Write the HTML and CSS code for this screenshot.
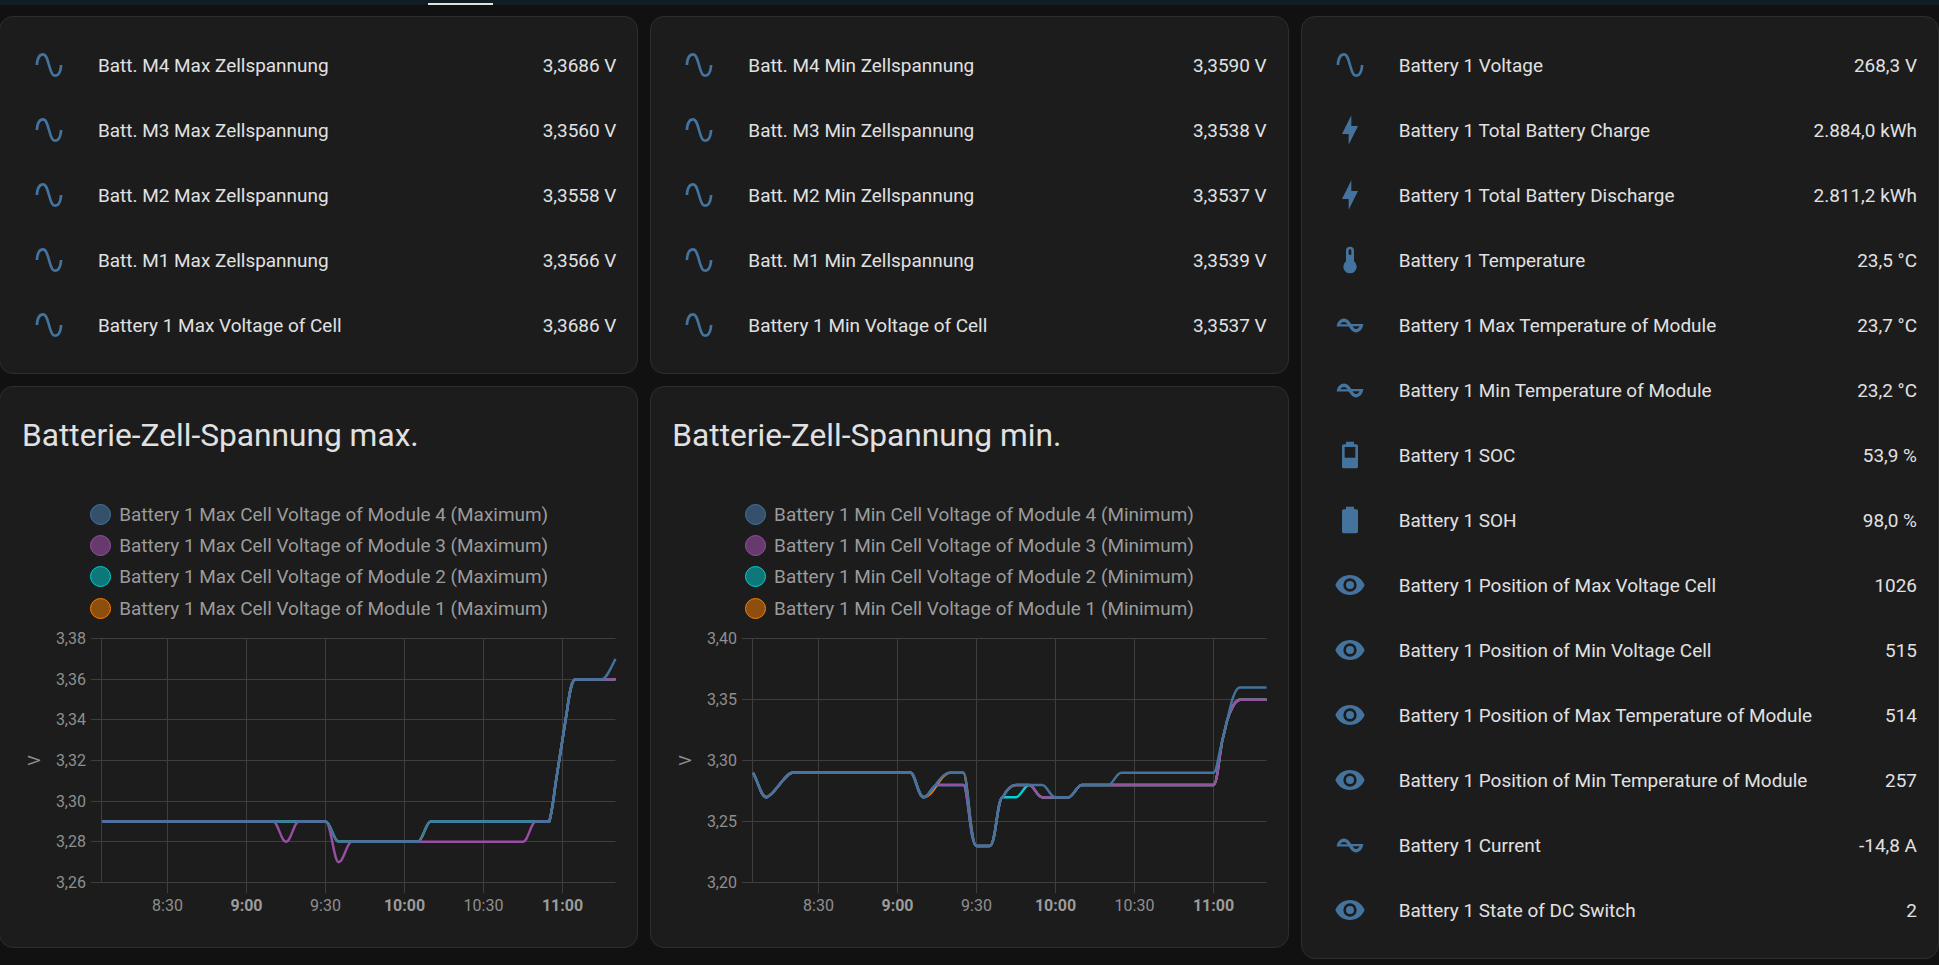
FILE: index.html
```html
<!DOCTYPE html>
<html lang="de">
<head>
<meta charset="utf-8">
<title>Battery</title>
<link rel="stylesheet" href="styles.css">
</head>
<body>
<svg class="defs" width="0" height="0" aria-hidden="true">
  <symbol id="i-sine" viewBox="0 0 24 24"><path d="M16.5,21C13.5,21 12.31,16.76 11.05,12.28C10.14,9.04 9,5 7.5,5C4.11,5 4,11.93 4,12H2C2,11.63 2.06,3 7.5,3C10.5,3 11.71,7.25 12.97,11.74C13.83,14.8 15,19 16.5,19C19.94,19 20.03,12.07 20.03,12H22.03C22.03,12.37 21.97,21 16.5,21Z"/></symbol>
  <symbol id="i-bolt" viewBox="0 0 24 24"><path d="M11 15H6L13 1V9H18L11 23V15Z"/></symbol>
  <symbol id="i-temp" viewBox="0 0 24 24"><path d="M15 13V5A3 3 0 0 0 9 5V13A5 5 0 1 0 15 13M12 4A1 1 0 0 1 13 5V8H11V5A1 1 0 0 1 12 4Z"/></symbol>
  <symbol id="i-ac" viewBox="0 0 24 24"><path fill-rule="evenodd" d="M2 13.2C2.4 9.6 5 7.2 7.5 7.2C10 7.2 11.6 9.4 13 11.3H22C21.6 15.2 19 17.6 16.5 17.6C14 17.6 12.4 15.2 11 13.2ZM4.8 11.5H10C9.5 10.5 8.6 9.8 7.5 9.8C6.3 9.8 5.3 10.5 4.8 11.5ZM14 13C14.5 14.1 15.4 15 16.5 15C17.7 15 18.7 14.1 19.2 13Z"/></symbol>
  <symbol id="i-b50" viewBox="0 0 24 24"><path d="M16,14H8V6H16M16.67,4H15V2H9V4H7.33A1.33,1.33 0 0,0 6,5.33V20.66C6,21.4 6.6,22 7.33,22H16.67C17.41,22 18,21.41 18,20.67V5.33C18,4.6 17.4,4 16.67,4Z"/></symbol>
  <symbol id="i-bat" viewBox="0 0 24 24"><path d="M16.67,4H15V2H9V4H7.33A1.33,1.33 0 0,0 6,5.33V20.67C6,21.4 6.6,22 7.33,22H16.67A1.33,1.33 0 0,0 18,20.67V5.33C18,4.6 17.4,4 16.67,4Z"/></symbol>
  <symbol id="i-eye" viewBox="0 0 24 24"><path d="M12,9A3,3 0 0,0 9,12A3,3 0 0,0 12,15A3,3 0 0,0 15,12A3,3 0 0,0 12,9M12,17A5,5 0 0,1 7,12A5,5 0 0,1 12,7A5,5 0 0,1 17,12A5,5 0 0,1 12,17M12,4.5C7,4.5 2.73,7.61 1,12C2.73,16.39 7,19.5 12,19.5C17,19.5 21.27,16.39 23,12C21.27,7.61 17,4.5 12,4.5Z"/></symbol>
</svg>

<header class="topbar"><span class="tab-indicator"></span></header>

<main class="columns">
  <div class="column">
    <section class="card entities">
      <div class="row"><svg class="icon"><use href="#i-sine"/></svg><span class="name">Batt. M4 Max Zellspannung</span><span class="value">3,3686 V</span></div>
      <div class="row"><svg class="icon"><use href="#i-sine"/></svg><span class="name">Batt. M3 Max Zellspannung</span><span class="value">3,3560 V</span></div>
      <div class="row"><svg class="icon"><use href="#i-sine"/></svg><span class="name">Batt. M2 Max Zellspannung</span><span class="value">3,3558 V</span></div>
      <div class="row"><svg class="icon"><use href="#i-sine"/></svg><span class="name">Batt. M1 Max Zellspannung</span><span class="value">3,3566 V</span></div>
      <div class="row"><svg class="icon"><use href="#i-sine"/></svg><span class="name">Battery 1 Max Voltage of Cell</span><span class="value">3,3686 V</span></div>
    </section>
    <section class="card chart-card">
      <h2 class="card-title">Batterie-Zell-Spannung max.</h2>
      <ul class="legend">
        <li class="legend-item"><span class="dot dot-blue"></span>Battery 1 Max Cell Voltage of Module 4 (Maximum)</li>
        <li class="legend-item"><span class="dot dot-purple"></span>Battery 1 Max Cell Voltage of Module 3 (Maximum)</li>
        <li class="legend-item"><span class="dot dot-teal"></span>Battery 1 Max Cell Voltage of Module 2 (Maximum)</li>
        <li class="legend-item"><span class="dot dot-orange"></span>Battery 1 Max Cell Voltage of Module 1 (Maximum)</li>
      </ul>
      <svg class="chart" viewBox="0 630 636 300" width="636" height="300">
        <g class="grid">
          <path d="M91 639.5H615.5M91 680.5H615.5M91 720.5H615.5M91 761.5H615.5M91 802.5H615.5M91 842.5H615.5M91 883.5H615.5"/>
          <path d="M101.5 639V884M167.5 639V894M246.5 639V894M325.5 639V894M404.5 639V894M483.5 639V894M562.5 639V894"/>
        </g>
        <g class="ylabels">
          <text x="86" y="645">3,38</text><text x="86" y="686">3,36</text><text x="86" y="726">3,34</text><text x="86" y="767">3,32</text><text x="86" y="808">3,30</text><text x="86" y="848">3,28</text><text x="86" y="889">3,26</text>
        </g>
        <text class="yunit" transform="translate(40 761.5) rotate(-90)">V</text>
        <g class="xlabels">
          <text x="167.5" y="912">8:30</text><text class="major" x="246.5" y="912">9:00</text><text x="325.5" y="912">9:30</text><text class="major" x="404.5" y="912">10:00</text><text x="483.5" y="912">10:30</text><text class="major" x="562.5" y="912">11:00</text>
        </g>
        <path class="line line-orange" d="M102 822.5H325.5C330.5 822.5 333.7 842.8 338.7 842.8H417.7C422.7 842.8 425.8 822.5 430.8 822.5H549.3C551.5 815 553 805 555.5 785L567 712C570 690 572 680.2 575.7 680.2H615.5"/>
        <path class="line line-teal" d="M102 822.5H325.5C330.5 822.5 333.7 842.8 338.7 842.8H417.7C422.7 842.8 425.8 822.5 430.8 822.5H549.3C551.5 815 553 805 555.5 785L567 712C570 690 572 680.2 575.7 680.2H615.5"/>
        <path class="line line-purple" d="M102 822.5H273C278 822.5 281 842.8 286 842.8C291 842.8 294 822.5 299 822.5H325.5C331 822.5 333.7 863.2 338.7 863.2C343.7 863.2 346.8 842.8 351.8 842.8H523C528 842.8 531 822.5 536 822.5H549.3C551.5 815 553 805 555.5 785L567 712C570 690 572 680.2 575.7 680.2H615.5"/>
        <path class="line line-blue" d="M102 822.5H325.5C330.5 822.5 333.7 842.8 338.7 842.8H417.7C422.7 842.8 425.8 822.5 430.8 822.5H549.3C551.5 815 553 805 555.5 785L567 712C570 690 572 680.2 575.7 680.2H602C606 680.2 610 671 615.5 659.9"/>
      </svg>
    </section>
  </div>

  <div class="column">
    <section class="card entities">
      <div class="row"><svg class="icon"><use href="#i-sine"/></svg><span class="name">Batt. M4 Min Zellspannung</span><span class="value">3,3590 V</span></div>
      <div class="row"><svg class="icon"><use href="#i-sine"/></svg><span class="name">Batt. M3 Min Zellspannung</span><span class="value">3,3538 V</span></div>
      <div class="row"><svg class="icon"><use href="#i-sine"/></svg><span class="name">Batt. M2 Min Zellspannung</span><span class="value">3,3537 V</span></div>
      <div class="row"><svg class="icon"><use href="#i-sine"/></svg><span class="name">Batt. M1 Min Zellspannung</span><span class="value">3,3539 V</span></div>
      <div class="row"><svg class="icon"><use href="#i-sine"/></svg><span class="name">Battery 1 Min Voltage of Cell</span><span class="value">3,3537 V</span></div>
    </section>
    <section class="card chart-card">
      <h2 class="card-title">Batterie-Zell-Spannung min.</h2>
      <ul class="legend">
        <li class="legend-item"><span class="dot dot-blue"></span>Battery 1 Min Cell Voltage of Module 4 (Minimum)</li>
        <li class="legend-item"><span class="dot dot-purple"></span>Battery 1 Min Cell Voltage of Module 3 (Minimum)</li>
        <li class="legend-item"><span class="dot dot-teal"></span>Battery 1 Min Cell Voltage of Module 2 (Minimum)</li>
        <li class="legend-item"><span class="dot dot-orange"></span>Battery 1 Min Cell Voltage of Module 1 (Minimum)</li>
      </ul>
      <svg class="chart" viewBox="0 630 636 300" width="636" height="300">
        <g class="grid">
          <path d="M91 639.5H615.5M91 700.5H615.5M91 761.5H615.5M91 822.5H615.5M91 883.5H615.5"/>
          <path d="M101.5 639V884M167.5 639V894M246.5 639V894M325.5 639V894M404.5 639V894M483.5 639V894M562.5 639V894"/>
        </g>
        <g class="ylabels">
          <text x="86" y="645">3,40</text><text x="86" y="706">3,35</text><text x="86" y="767">3,30</text><text x="86" y="828">3,25</text><text x="86" y="889">3,20</text>
        </g>
        <text class="yunit" transform="translate(40 761.5) rotate(-90)">V</text>
        <g class="xlabels">
          <text x="167.5" y="912">8:30</text><text class="major" x="246.5" y="912">9:00</text><text x="325.5" y="912">9:30</text><text class="major" x="404.5" y="912">10:00</text><text x="483.5" y="912">10:30</text><text class="major" x="562.5" y="912">11:00</text>
        </g>
        <path class="line line-orange" d="M102 773.8C107 782 110 798.2 115.2 798.2C122 798.2 134 773.8 141.5 773.8H259.7C264 773.8 267 798.2 272.8 798.2C280 798.2 285 786 291 779C294 775.5 296 773.8 299.2 773.8H312.3C317 773.8 319 847 325.5 847H338.7C345 847 346 798.2 351.8 798.2C355 792 360 786 365 786H378.2C383 786 386 798.2 391.3 798.2H417.7C422 798.2 426 786 430.8 786H562.5C566 786 568 760 571 743L576 722C579 712 584 700.7 589 700.7H615.5"/>
        <path class="line line-teal" d="M102 773.8C107 782 110 798.2 115.2 798.2C122 798.2 134 773.8 141.5 773.8H259.7C264 773.8 267 798.2 272.8 798.2C278 798.2 281 786 286 786H312.3C317 786 319 847 325.5 847H338.7C345 847 346 798.2 351.8 798.2H365C370 798.2 373 786 378.2 786C383 786 386 798.2 391.3 798.2H417.7C422 798.2 426 786 430.8 786H562.5C566 786 568 760 571 743L576 722C579 712 584 700.7 589 700.7H615.5"/>
        <path class="line line-purple" d="M102 773.8C107 782 110 798.2 115.2 798.2C122 798.2 134 773.8 141.5 773.8H259.7C264 773.8 267 798.2 272.8 798.2C278 798.2 281 786 286 786H312.3C317 786 319 847 325.5 847H338.7C345 847 346 798.2 351.8 798.2C355 792 360 786 365 786H378.2C383 786 386 798.2 391.3 798.2H417.7C422 798.2 426 786 430.8 786H562.5C566 786 568 760 571 743L576 722C579 712 584 700.7 589 700.7H615.5"/>
        <path class="line line-blue" d="M102 773.8C107 782 110 798.2 115.2 798.2C122 798.2 134 773.8 141.5 773.8H259.7C264 773.8 267 798.2 272.8 798.2C280 798.2 288 773.8 299.2 773.8H312.3C317 773.8 319 847 325.5 847H338.7C345 847 346 798.2 351.8 798.2C355 792 360 786 365 786H391.3C396 786 399 798.2 404.5 798.2H417.7C422 798.2 426 786 430.8 786H457.2C462 786 465 773.8 470.3 773.8H562.5C565 773.8 567 760 569.3 750L579.3 708C582 697 585 688.5 589 688.5H615.5"/>
      </svg>
    </section>
  </div>

  <div class="column">
    <section class="card entities">
      <div class="row"><svg class="icon"><use href="#i-sine"/></svg><span class="name">Battery 1 Voltage</span><span class="value">268,3 V</span></div>
      <div class="row"><svg class="icon"><use href="#i-bolt"/></svg><span class="name">Battery 1 Total Battery Charge</span><span class="value">2.884,0 kWh</span></div>
      <div class="row"><svg class="icon"><use href="#i-bolt"/></svg><span class="name">Battery 1 Total Battery Discharge</span><span class="value">2.811,2 kWh</span></div>
      <div class="row"><svg class="icon"><use href="#i-temp"/></svg><span class="name">Battery 1 Temperature</span><span class="value">23,5 °C</span></div>
      <div class="row"><svg class="icon"><use href="#i-ac"/></svg><span class="name">Battery 1 Max Temperature of Module</span><span class="value">23,7 °C</span></div>
      <div class="row"><svg class="icon"><use href="#i-ac"/></svg><span class="name">Battery 1 Min Temperature of Module</span><span class="value">23,2 °C</span></div>
      <div class="row"><svg class="icon"><use href="#i-b50"/></svg><span class="name">Battery 1 SOC</span><span class="value">53,9 %</span></div>
      <div class="row"><svg class="icon"><use href="#i-bat"/></svg><span class="name">Battery 1 SOH</span><span class="value">98,0 %</span></div>
      <div class="row"><svg class="icon"><use href="#i-eye"/></svg><span class="name">Battery 1 Position of Max Voltage Cell</span><span class="value">1026</span></div>
      <div class="row"><svg class="icon"><use href="#i-eye"/></svg><span class="name">Battery 1 Position of Min Voltage Cell</span><span class="value">515</span></div>
      <div class="row"><svg class="icon"><use href="#i-eye"/></svg><span class="name">Battery 1 Position of Max Temperature of Module</span><span class="value">514</span></div>
      <div class="row"><svg class="icon"><use href="#i-eye"/></svg><span class="name">Battery 1 Position of Min Temperature of Module</span><span class="value">257</span></div>
      <div class="row"><svg class="icon"><use href="#i-ac"/></svg><span class="name">Battery 1 Current</span><span class="value">-14,8 A</span></div>
      <div class="row"><svg class="icon"><use href="#i-eye"/></svg><span class="name">Battery 1 State of DC Switch</span><span class="value">2</span></div>
    </section>
  </div>
</main>
</body>
</html>
```

FILE: styles.css
```css
* { box-sizing: border-box; }
html, body { margin: 0; padding: 0; height: 965px; overflow: hidden; }
body {
  background: #111111;
  color: #e1e1e1;
  font-family: Roboto, "Liberation Sans", sans-serif;
}
.defs { position: absolute; }

.topbar {
  height: 5px;
  background: #101e24;
  display: flex;
  align-items: flex-end;
  padding-left: 428px;
}
.tab-indicator { width: 65px; height: 2px; background: #e1e1e1; }

.columns {
  display: grid;
  grid-template-columns: repeat(3, 1fr);
  column-gap: 12px;
  padding-top: 11px;
  align-items: start;
}
.column { display: flex; flex-direction: column; gap: 12px; min-width: 0; }
.column:first-child { margin-left: -1px; }
.column:first-child .card { padding-left: 1px; }
.column:first-child .chart { margin-left: -1px; }

.card {
  background: #1c1c1c;
  border: 1px solid #2e2e2e;
  border-radius: 14px;
}
.entities { padding: 15.5px 0; }
.row {
  display: flex;
  align-items: center;
  height: 65px;
  padding: 0 21px 0 32px;
  font-size: 18.96px;
}
.icon {
  width: 32px;
  height: 32px;
  fill: #44739e;
  flex: none;
  margin-right: 33px;
}
.name { flex: 1; white-space: nowrap; }
.value { white-space: nowrap; }

.chart-card { height: 562px; }
.card-title {
  margin: 0;
  height: 111.5px;
  padding: 31px 0 0 21px;
  font-size: 31.7px;
  line-height: 36px;
  font-weight: 400;
  color: #e1e1e1;
}
.legend {
  list-style: none;
  margin: 0 auto;
  padding: 0;
  width: fit-content;
  font-size: 18.96px;
  color: #9b9b9b;
}
.legend-item {
  display: flex;
  align-items: center;
  height: 31.3px;
  white-space: nowrap;
}
.dot {
  width: 21px;
  height: 21px;
  border-radius: 50%;
  border: 1.2px solid;
  margin-right: 8px;
  flex: none;
}
.dot-blue { border-color: #44739e; background: rgba(68, 115, 158, 0.6); }
.dot-purple { border-color: #984ea3; background: rgba(152, 78, 163, 0.6); }
.dot-teal { border-color: #00d2d5; background: rgba(0, 210, 213, 0.5); }
.dot-orange { border-color: #ff7f00; background: rgba(255, 127, 0, 0.5); }

.chart { display: block; margin-top: 5.5px; }
.grid path { fill: none; stroke: #3e3e3e; stroke-width: 1; }
.ylabels text { text-anchor: end; }
.ylabels text, .xlabels text, .yunit { font-size: 16px; fill: #8f8f8f; }
.xlabels text { text-anchor: middle; }
.xlabels .major { font-weight: 700; fill: #9b9b9b; }
.yunit { text-anchor: middle; font-size: 16px; }
.line { fill: none; stroke-width: 2.4; stroke-linejoin: round; }
.line-blue { stroke: #44739e; }
.line-purple { stroke: #984ea3; }
.line-teal { stroke: #00d2d5; }
.line-orange { stroke: #ff7f00; }
```
